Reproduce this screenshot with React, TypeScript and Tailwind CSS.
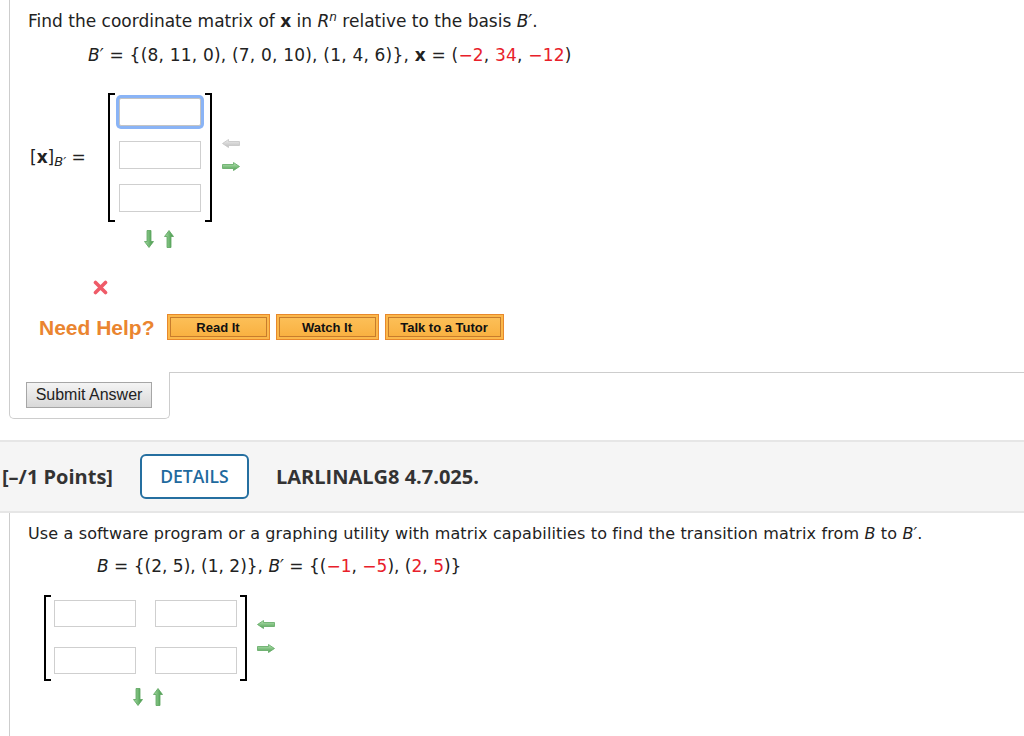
import React from 'react';

function HArrow({ dir, gray }: { dir: 'left' | 'right'; gray?: boolean }) {
  const d =
    dir === 'left'
      ? 'M0.5 4.5 L6.5 0.5 V2.5 H17.5 V6.5 H6.5 V8.5 Z'
      : 'M17.5 4.5 L11.5 0.5 V2.5 H0.5 V6.5 H11.5 V8.5 Z';
  return (
    <svg width="18" height="9" viewBox="0 0 18 9">
      <defs>
        <linearGradient id="hg-green" x1="0" y1="0" x2="0" y2="1">
          <stop offset="0" stopColor="#b9e6b6" />
          <stop offset="1" stopColor="#4f9f52" />
        </linearGradient>
        <linearGradient id="hg-gray" x1="0" y1="0" x2="0" y2="1">
          <stop offset="0" stopColor="#eeeeee" />
          <stop offset="1" stopColor="#bdbdbd" />
        </linearGradient>
      </defs>
      <path
        d={d}
        fill={gray ? 'url(#hg-gray)' : 'url(#hg-green)'}
        stroke={gray ? '#c4c4c4' : '#5fa862'}
        strokeWidth="0.8"
        strokeLinejoin="round"
      />
    </svg>
  );
}

function VArrow({ dir }: { dir: 'up' | 'down' }) {
  const d =
    dir === 'down'
      ? 'M5 17.5 L0.5 11.5 H3 V0.5 H7 V11.5 H9.5 Z'
      : 'M5 0.5 L0.5 6.5 H3 V17.5 H7 V6.5 H9.5 Z';
  return (
    <svg width="10" height="18" viewBox="0 0 10 18">
      <defs>
        <linearGradient id="vg-green" x1="0" y1="0" x2="1" y2="0">
          <stop offset="0" stopColor="#a7dca5" />
          <stop offset="1" stopColor="#3f9444" />
        </linearGradient>
      </defs>
      <path d={d} fill="url(#vg-green)" stroke="#5aa35d" strokeWidth="0.8" strokeLinejoin="round" />
    </svg>
  );
}

function Bracket({ side }: { side: 'l' | 'r' }) {
  return (
    <div
      className={
        side === 'l'
          ? 'w-[7px] self-stretch border-l-2 border-y-2 border-black'
          : 'w-[7px] self-stretch border-r-2 border-y-2 border-black'
      }
    />
  );
}

function Cell({ focused, h = 'h-[28px]' }: { focused?: boolean; h?: string }) {
  return (
    <div
      className={
        focused
          ? `w-[82px] ${h} bg-white border border-[#c4c4c4] rounded-[2px] shadow-[0_0_0_3px_#8ab4f6]`
          : `w-[82px] ${h} bg-white border border-[#cfcfcf]`
      }
    />
  );
}

function HelpButton({ label, w }: { label: string; w: string }) {
  return (
    <div className={`${w} h-[26px] border border-[#e8892c] bg-[#fbb84b] p-[2px]`}>
      <div className="h-full border border-[#c77c2d] bg-gradient-to-b from-[#fcbf57] to-[#f9b141] flex items-center justify-center font-['Liberation_Sans',Arial,sans-serif] font-bold text-[13px] leading-none text-[#111]">
        {label}
      </div>
    </div>
  );
}

export default function App() {
  return (
    <div className="w-[1024px] h-[736px] overflow-hidden bg-white font-['DejaVu_Sans',Verdana,sans-serif] text-[16px] text-[#222]">
      {/* Question 1 */}
      <div className="ml-[9px] border-l border-[#cdcdcd] pt-[10px] pb-[32px]">
        <p className="pl-[18px] leading-[22px] text-[17px]">
          Find the coordinate matrix of <b>x</b> in <i>R</i>
          <sup className="text-[12px] italic">n</sup> relative to the basis <i>B′</i>.
        </p>
        <p className="pl-[78px] mt-[12px] leading-[22px] text-[17px] tracking-[0.2px] whitespace-pre">
          <i>B′</i> = {'{'}(8, 11, 0), (7, 0, 10), (1, 4, 6){'}'}, <b>x</b> = (<span className="text-[#e8202a]">−2</span>, <span className="text-[#e8202a]">34</span>, <span className="text-[#e8202a]">−12</span>)
        </p>

        {/* matrix row */}
        <div className="mt-[27px] flex items-center pl-[20px]">
          <div className="w-[78px] whitespace-nowrap text-[17px]">
            [<b>x</b>]<sub className="italic text-[13px]">B′</sub> =
          </div>
          <div className="flex h-[129px]">
            <Bracket side="l" />
            <div className="flex flex-col gap-[15px] py-[5px] px-[4px]">
              <Cell focused />
              <Cell />
              <Cell />
            </div>
            <Bracket side="r" />
          </div>
          <div className="ml-[10px] -mt-[6px] flex flex-col gap-[14px]">
            <HArrow dir="left" gray />
            <HArrow dir="right" />
          </div>
        </div>
        <div className="mt-[8px] pl-[134px] flex gap-[10px]">
          <VArrow dir="down" />
          <VArrow dir="up" />
        </div>

        {/* result mark */}
        <div className="mt-[32px] pl-[83px] leading-none">
          <svg width="15" height="15" viewBox="0 0 15 15" className="block">
            <path d="M2.5 2.5 L12.5 12.5 M12.5 2.5 L2.5 12.5" stroke="#ef5b68" strokeWidth="3.6" strokeLinecap="round" />
          </svg>
        </div>

        {/* need help */}
        <div className="mt-[19px] pl-[29px] flex items-center">
          <span className="font-['Liberation_Sans',Arial,sans-serif] font-bold text-[21px] leading-none text-[#ea8530] mr-[12px]">
            Need Help?
          </span>
          <div className="flex gap-[6px]">
            <HelpButton label="Read It" w="w-[103px]" />
            <HelpButton label="Watch It" w="w-[103px]" />
            <HelpButton label="Talk to a Tutor" w="w-[119px]" />
          </div>
        </div>
      </div>

      {/* submit */}
      <div className="ml-[9px] flex">
        <div className="w-[161px] border-l border-r border-b border-[#cdcdcd] rounded-b-[5px] pl-[16px] pt-[10px] pb-[10px]">
          <button className="block w-[126px] h-[26px] border border-[#a6a6a6] bg-gradient-to-b from-[#f4f4f4] to-[#d9d9d9] font-['Liberation_Sans',Arial,sans-serif] text-[16px] leading-none text-[#222]">
            Submit Answer
          </button>
        </div>
        <div className="flex-1 border-t border-[#cdcdcd]" />
      </div>

      {/* question 2 header */}
      <div className="mt-[21px] h-[73px] bg-[#f5f5f5] border-y-2 border-[#e6e6e6] flex items-center font-['Open_Sans',sans-serif] text-[#333]">
        <span className="pl-[2px] font-bold text-[20px]">[–/1 Points]</span>
        <div className="ml-[27px] w-[109px] h-[45px] rounded-[6px] border-2 border-[#256fa0] bg-white flex items-center justify-center font-semibold text-[17.5px] text-[#1f6a9e]">
          DETAILS
        </div>
        <span className="ml-[27px] font-bold text-[20px]">LARLINALG8 4.7.025.</span>
      </div>

      {/* Question 2 */}
      <div className="ml-[9px] border-l border-[#cdcdcd] pt-[10px] h-[300px]">
        <p className="pl-[18px] leading-[22px] text-[16px] tracking-[0.14px]">
          Use a software program or a graphing utility with matrix capabilities to find the transition matrix from <i>B</i> to <i>B′</i>.
        </p>
        <p className="pl-[87px] mt-[10px] leading-[22px] text-[17px] whitespace-pre">
          <i>B</i> = {'{'}(2, 5), (1, 2){'}'}, <i>B′</i> = {'{'}(<span className="text-[#e8202a]">−1</span>, <span className="text-[#e8202a]">−5</span>), (<span className="text-[#e8202a]">2</span>, <span className="text-[#e8202a]">5</span>){'}'}
        </p>
        <div className="mt-[18px] pl-[34px] flex items-center">
          <div className="flex h-[86px]">
            <Bracket side="l" />
            <div className="grid grid-cols-2 gap-x-[19px] gap-y-[17px] py-[5px] px-[3px]">
              <Cell h="h-[27px]" />
              <Cell h="h-[27px]" />
              <Cell h="h-[27px]" />
              <Cell h="h-[27px]" />
            </div>
            <Bracket side="r" />
          </div>
          <div className="ml-[10px] -mt-[4px] flex flex-col gap-[15px]">
            <HArrow dir="left" />
            <HArrow dir="right" />
          </div>
        </div>
        <div className="mt-[7px] pl-[123px] flex gap-[10px]">
          <VArrow dir="down" />
          <VArrow dir="up" />
        </div>
      </div>
    </div>
  );
}
